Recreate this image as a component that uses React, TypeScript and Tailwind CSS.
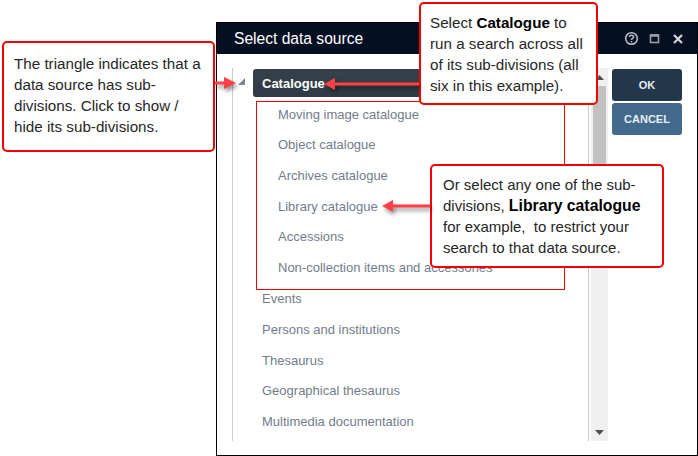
import React from "react";

const callout = "absolute rounded-[5px] border-2 border-[#f50000] bg-white text-[15.2px] leading-[21px] text-[#262626]";

function Arrow({ className, width, dir }: { className: string; width: number; dir: "left" | "right" }) {
  const left = `M0 6 L11 0 V4.5 H${width} V7.5 H11 V12 Z`;
  const right = `M${width} 6 L${width - 12} 0 V4.5 H0 V7.5 H${width - 12} V12 Z`;
  return (
    <svg className={`${className} drop-shadow-[2px_3px_2px_rgba(0,0,0,0.45)]`} width={width} height={12} viewBox={`0 0 ${width} 12`}>
      <path d={dir === "left" ? left : right} fill="#ff4147" />
    </svg>
  );
}

const subs = ["Moving image catalogue", "Object catalogue", "Archives catalogue", "Library catalogue", "Accessions", "Non-collection items and accessories"];
const tops = ["Events", "Persons and institutions", "Thesaurus", "Geographical thesaurus", "Multimedia documentation"];

export default function App() {
  return (
    <div className="relative h-[456px] w-[698px] overflow-hidden bg-white font-['Liberation_Sans',Arial,sans-serif]">
      <div className="pl-[216px] pt-[22px]">
        <div className="flex h-[434px] w-[482px] flex-col border border-black">
          <div className="flex h-[31px] shrink-0 items-center bg-[#050f22] pl-[17px] pr-[12px] text-white">
            <span className="text-[15.6px]">Select data source</span>
            <div className="ml-auto flex items-center gap-[9px] text-[#b9bdc4]">
              <svg width="15" height="15" viewBox="0 0 15 15" fill="none" stroke="currentColor" strokeWidth="1.5" className="-translate-x-[1px]">
                <circle cx="7.5" cy="7.5" r="5.8" />
                <path d="M5.5 6c0-2.5 4.1-2.5 4.1 0 0 1.4-2.1 1.5-2.1 3M7.5 10v1.5" />
              </svg>
              <svg width="11" height="11" viewBox="0 0 11 11" fill="none" stroke="#9a9fa7" className="mr-[2px]">
                <rect x="1.5" y="2" width="8" height="7.5" strokeWidth="1.6" />
                <path d="M1 2.5h9" strokeWidth="2.6" />
              </svg>
              <svg width="14" height="14" viewBox="0 0 14 14" fill="none" stroke="#d4d7db" strokeWidth="2.2">
                <path d="M3 3l8 8M11 3l-8 8" />
              </svg>
            </div>
          </div>
          <div className="flex flex-1 py-[14px]">
            <div className="ml-[15px] flex w-[357px] border-x border-[#cccccc]">
              <div className="flex w-[20px] justify-end pt-[10px]">
                <svg width="7" height="7" viewBox="0 0 7 7" className="mr-[8px]"><path d="M7 0v7H0z" fill="#7d8590" /></svg>
              </div>
              <div className="flex-1 text-[13px] text-[#727c8b]">
                <div className="mr-[18px] mt-[1px] flex h-[28px] items-center rounded-[3px] bg-[linear-gradient(#36424b,#2f3a44)] pl-[9px] pt-[1px] font-bold text-white">Catalogue</div>
                <div className="pl-[25px] pt-[2px]">
                  {subs.map((s) => (
                    <div key={s} className="flex h-[30.7px] items-center">{s}</div>
                  ))}
                </div>
                <div className="pl-[9px] pt-[0.5px]">
                  {tops.map((s) => (
                    <div key={s} className="flex h-[30.7px] items-center">{s}</div>
                  ))}
                </div>
              </div>
            </div>
            <div className="ml-[2px] flex w-[17px] flex-col bg-[#f0f0f0]">
              <div className="flex h-[18px] items-center justify-center">
                <svg width="9" height="5" viewBox="0 0 9 5"><path d="M4.5 0L9 5H0z" fill="#505050" /></svg>
              </div>
              <div className="mx-[2px] h-[135px] bg-[#c1c1c1]" />
              <div className="mt-auto flex h-[17px] items-center justify-center">
                <svg width="9" height="5" viewBox="0 0 9 5"><path d="M0 0h9L4.5 5z" fill="#505050" /></svg>
              </div>
            </div>
            <div className="ml-[4px] mt-[1px] flex w-[70px] flex-col gap-[2px] text-[11px] font-bold text-[#e8edf2]">
              <div className="flex h-[32px] items-center justify-center rounded-[3px] bg-[#23374b] pt-[1px]">OK</div>
              <div className="flex h-[32px] items-center justify-center rounded-[3px] bg-[#426a8c] pt-[1px]">CANCEL</div>
            </div>
          </div>
        </div>
      </div>

      <div className="absolute left-[256px] top-[101px] h-[189px] w-[309px] border border-[#f00000]" />

      <div className={`${callout} left-[2px] top-[41px] h-[111px] w-[213px] pl-[10px] pt-[10px]`}>
        The triangle indicates that a<br />data source has sub-<br />divisions. Click to show /<br />hide its sub-divisions.
      </div>
      <div className={`${callout} left-[419px] top-[2px] h-[103px] w-[179px] pl-[9px] pt-[8px]`}>
        Select <b className="text-black">Catalogue</b> to<br />run a search across all<br />of its sub-divisions (all<br />six in this example).
      </div>
      <div className={`${callout} left-[430px] top-[164px] h-[104px] w-[234px] pl-[11px] pt-[8px] text-[15px]`}>
        Or select any one of the sub-<br />divisions, <b className="text-[15.8px] text-black">Library catalogue</b><br />for example,&nbsp; to restrict your<br />search to that data source.
      </div>

      <Arrow className="absolute left-[215px] top-[77px]" width={21} dir="right" />
      <Arrow className="absolute left-[324px] top-[78px]" width={95} dir="left" />
      <Arrow className="absolute left-[382px] top-[200px]" width={48} dir="left" />
    </div>
  );
}
